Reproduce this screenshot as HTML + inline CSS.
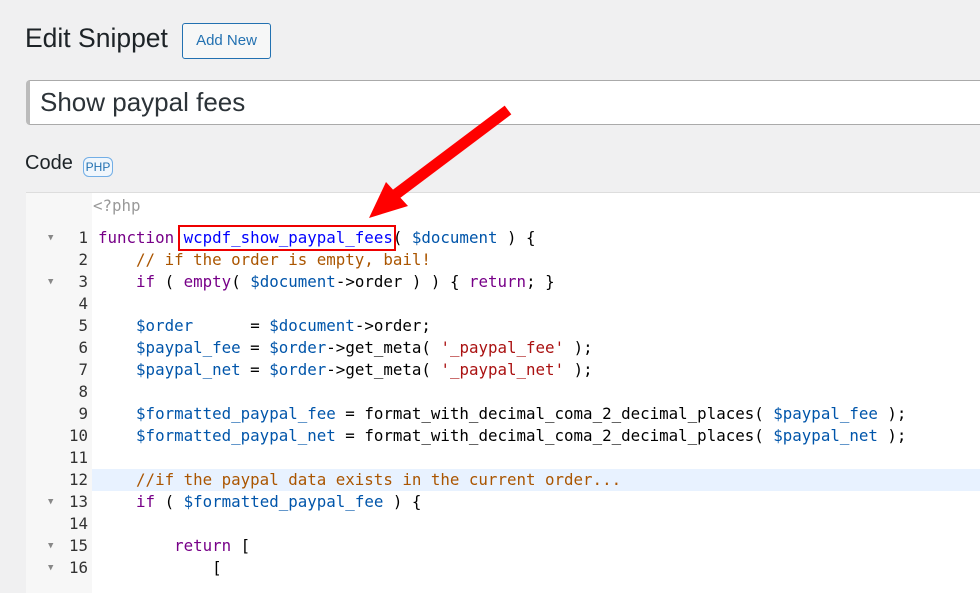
<!DOCTYPE html>
<html><head><style>
body{margin:0;width:980px;height:571px;overflow:hidden;background:#f0f0f1;font-family:"Liberation Sans",sans-serif;position:relative}
.t{position:absolute;left:25px;top:23px;font-size:26.5px;color:#1d2327}
.btn{position:absolute;left:182px;top:23px;border:1px solid #2271b1;border-radius:3px;background:#f6f7f7;color:#2271b1;font-size:15px;line-height:34px;text-align:center;box-sizing:border-box;width:89px;height:36px}
.in{position:absolute;left:26px;top:80px;width:970px;height:45px;background:#fff;border:1px solid #aaa;border-left:4px solid #bbb;border-radius:4px 0 0 4px;box-sizing:border-box;font-size:26px;color:#2c3338;padding-left:10px;line-height:42px}
.c{position:absolute;left:25px;top:152px;font-size:20px;color:#1d2327}
.php{position:absolute;left:83px;top:157px;width:28px;height:18px;border:1px solid #72aee6;color:#2271b1;border-radius:6px;font-size:12px;line-height:18px;text-align:center;background:#f0f6fc}
.ed{position:absolute;left:26px;top:192px;width:960px;height:400px;background:#fff;border-top:1px solid #ddd}
.gut{position:absolute;left:0;top:0;width:66px;height:400px;background:#f7f7f7}
.code{position:absolute;left:0;top:0;font-family:"DejaVu Sans Mono",monospace;font-size:15.8px}
.l{position:absolute;left:0;height:22px;line-height:22px;width:960px;white-space:pre}
.n{position:absolute;left:0;width:62px;text-align:right;color:#333}
.f{position:absolute;left:22px;color:#888;font-size:9px}
.x{position:absolute;left:72px}
.k{color:#770088}.v{color:#0055aa}.cm{color:#aa5500}.s{color:#aa1111}.g{color:#999}.fn{color:#0000ff}
</style></head><body>
<div class="t">Edit Snippet</div>
<div class="btn">Add New</div>
<div class="in">Show paypal fees</div>
<div class="c">Code</div>
<div class="php">PHP</div>
<div class="ed"><div class="gut"></div>
<div class="code">
<div class="l" style="top:2px"><span class="x g" style="left:67px">&lt;?php</span></div>
<div class="l" style="top:34px"><span class="f">▼</span><span class="n">1</span><span class="x"><span class="k">function</span> <span class="fn">wcpdf_show_paypal_fees</span>( <span class="v">$document</span> ) {</span></div>
<div class="l" style="top:56px"><span class="n">2</span><span class="x">    <span class="cm">// if the order is empty, bail!</span></span></div>
<div class="l" style="top:78px"><span class="f">▼</span><span class="n">3</span><span class="x">    <span class="k">if</span> ( <span class="k">empty</span>( <span class="v">$document</span>-&gt;order ) ) { <span class="k">return</span>; }</span></div>
<div class="l" style="top:100px"><span class="n">4</span></div>
<div class="l" style="top:122px"><span class="n">5</span><span class="x">    <span class="v">$order</span>      = <span class="v">$document</span>-&gt;order;</span></div>
<div class="l" style="top:144px"><span class="n">6</span><span class="x">    <span class="v">$paypal_fee</span> = <span class="v">$order</span>-&gt;get_meta( <span class="s">'_paypal_fee'</span> );</span></div>
<div class="l" style="top:166px"><span class="n">7</span><span class="x">    <span class="v">$paypal_net</span> = <span class="v">$order</span>-&gt;get_meta( <span class="s">'_paypal_net'</span> );</span></div>
<div class="l" style="top:188px"><span class="n">8</span></div>
<div class="l" style="top:210px"><span class="n">9</span><span class="x">    <span class="v">$formatted_paypal_fee</span> = format_with_decimal_coma_2_decimal_places( <span class="v">$paypal_fee</span> );</span></div>
<div class="l" style="top:232px"><span class="n">10</span><span class="x">    <span class="v">$formatted_paypal_net</span> = format_with_decimal_coma_2_decimal_places( <span class="v">$paypal_net</span> );</span></div>
<div class="l" style="top:254px"><span class="n">11</span></div>
<div class="l" style="top:276px"><div style="position:absolute;left:66px;top:0;width:900px;height:22px;background:#e8f2ff"></div><span class="n">12</span><span class="x">    <span class="cm">//if the paypal data exists in the current order...</span></span></div>
<div class="l" style="top:298px"><span class="f">▼</span><span class="n">13</span><span class="x">    <span class="k">if</span> ( <span class="v">$formatted_paypal_fee</span> ) {</span></div>
<div class="l" style="top:320px"><span class="n">14</span></div>
<div class="l" style="top:342px"><span class="f">▼</span><span class="n">15</span><span class="x">        <span class="k">return</span> [</span></div>
<div class="l" style="top:364px"><span class="f">▼</span><span class="n">16</span><span class="x">            [</span></div>
</div></div>
<div style="position:absolute;left:178px;top:225px;width:214px;height:22px;border:2px solid #e00"></div>
<svg style="position:absolute;left:0;top:0" width="980" height="571"><line x1="508" y1="110" x2="395" y2="195" stroke="#f00" stroke-width="11"/><polygon points="369,218 386,182 408,206" fill="#f00"/></svg>
</body></html>
